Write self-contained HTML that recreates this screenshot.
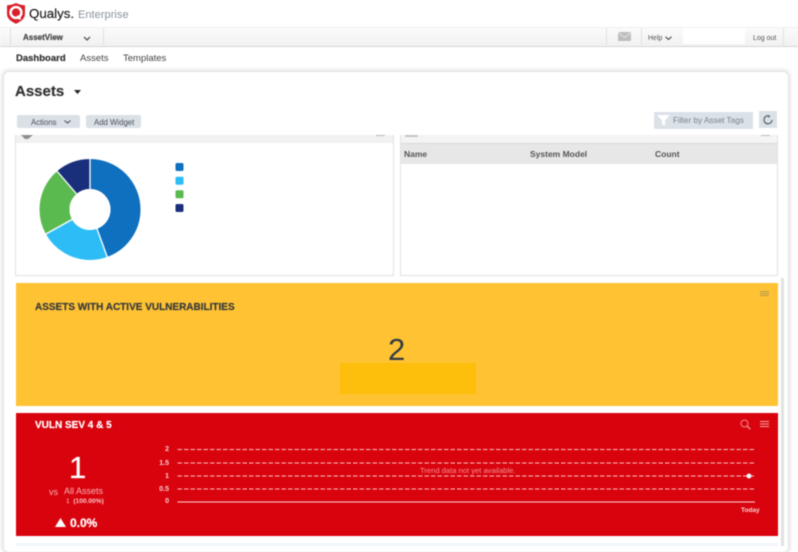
<!DOCTYPE html>
<html><head><meta charset="utf-8"><style>
html,body{margin:0;padding:0;background:#fff}
body{width:798px;height:546px;position:relative;overflow:hidden;font-family:"Liberation Sans",sans-serif;color:#333}
.a{position:absolute}
.t{position:absolute;white-space:nowrap;line-height:1}
.b{-webkit-text-stroke:.2px currentColor}
svg{position:absolute;overflow:visible}
#w{position:absolute;left:0;top:0;width:798px;height:546px;filter:blur(.45px)}
</style></head><body><div id="w">
<svg style="left:6px;top:2px" width="20" height="22" viewBox="0 0 20 22"><path d="M10 1C7.500 2.300 4.500 3 1.500 3.200 1 3.200 1 3.500 1 4v8c0 4.500 4 7.500 9 9.800 5-2.300 9-5.300 9-9.800V4c0-.5 0-.8-.5-.8C15.500 3 12.500 2.300 10 1Z" fill="#d8202c"/><circle cx="10" cy="10.500" r="5.400" fill="none" stroke="#fff" stroke-width="2.500"/><path d="M11 14l3.500 3.200" stroke="#fff" stroke-width="2"/></svg>
<div class="t b" style="left:29px;top:7px;font-size:13.300px;color:#222">Qualys.</div>
<div class="t" style="left:78px;top:10px;font-size:11px;color:#8a929b;letter-spacing:.05px">Enterprise</div>

<div class="a" style="left:0;top:27px;width:798px;height:18px;background:linear-gradient(#fbfbfb,#f1f1f1);border-bottom:1px solid #d6d6d6;border-top:1px solid #efefef"></div>
<div class="a" style="left:10px;top:28px;width:1px;height:17px;background:#e0e0e0"></div>
<div class="a" style="left:103px;top:28px;width:1px;height:17px;background:#e0e0e0"></div>
<div class="t b" style="left:23px;top:33.500px;font-size:8px;font-weight:bold;color:#444">AssetView</div>
<svg style="left:83px;top:36px" width="8" height="5"><path d="M1 1l3 3 3-3" fill="none" stroke="#555" stroke-width="1.300"/></svg>
<div class="a" style="left:606px;top:28px;width:1px;height:17px;background:#e0e0e0"></div>
<svg style="left:618px;top:32px" width="13" height="9"><rect width="13" height="9" fill="#bdbdbd"/><path d="M0 .5l6.500 5 6.500-5" fill="none" stroke="#e8e8e8" stroke-width=".8"/></svg>
<div class="a" style="left:641px;top:28px;width:1px;height:17px;background:#e0e0e0"></div>
<div class="t" style="left:648px;top:34.500px;font-size:7px;color:#555">Help</div>
<svg style="left:665px;top:36px" width="7" height="5"><path d="M.5 .8l3 2.700 3-2.700" fill="none" stroke="#555" stroke-width="1.200"/></svg>
<div class="a" style="left:683px;top:28px;width:62px;height:16px;background:#fff"></div>
<div class="t" style="left:753px;top:34.500px;font-size:7px;color:#555">Log out</div>
<div class="a" style="left:783px;top:28px;width:1px;height:17px;background:#e0e0e0"></div>

<div class="t b" style="left:16px;top:54px;font-size:9.500px;font-weight:bold;color:#333">Dashboard</div>
<div class="t" style="left:80px;top:54px;font-size:9.500px;color:#444">Assets</div>
<div class="t" style="left:123px;top:54px;font-size:9.500px;color:#444">Templates</div>

<div class="a" style="left:4px;top:72px;width:784px;height:480px;background:#fff;border-radius:5px;box-shadow:0 0 4px 2px #dedede"></div>
<div class="t b" style="left:15px;top:84px;font-size:15px;font-weight:bold;color:#333">Assets</div>
<svg style="left:74px;top:90px" width="7" height="4"><path d="M0 0h7L3.500 4Z" fill="#222"/></svg>

<div class="a" style="left:17px;top:115px;width:63px;height:13px;background:#d9e1e7;border-radius:2px"></div>
<div class="t" style="left:31px;top:118.500px;font-size:7.800px;color:#4a4f55">Actions</div>
<svg style="left:64px;top:120px" width="7" height="4"><path d="M.5 .5l3 2.500 3-2.500" fill="none" stroke="#4a4f55" stroke-width="1.100"/></svg>
<div class="a" style="left:86px;top:115px;width:55px;height:13px;background:#d9e1e7;border-radius:2px"></div>
<div class="t" style="left:94px;top:118.500px;font-size:7.800px;color:#4a4f55">Add Widget</div>

<div class="a" style="left:654px;top:112px;width:99px;height:17px;background:#dae2e8;border-radius:1px"></div>
<svg style="left:657px;top:115px" width="13" height="11"><path d="M0 0h13L8 5.500V11L5 9V5.500Z" fill="#fff"/></svg>
<div class="t" style="left:673px;top:117px;font-size:8.200px;color:#7a838a">Filter by Asset Tags</div>
<div class="a" style="left:759px;top:111px;width:18px;height:17px;background:#dae2e8"></div>
<svg style="left:763px;top:115px" width="10" height="10" viewBox="0 0 10 10"><path d="M6.500 1.100A4 4 0 1 0 9 5" fill="none" stroke="#5f6870" stroke-width="1.300"/><path d="M5 0l2.500 1.200L5.500 3Z" fill="#5f6870"/></svg>

<!-- left panel -->
<div class="a" style="left:15px;top:135px;width:379px;height:141px;box-sizing:border-box;background:#fff;border:1px solid #e2e2e2;border-top:0"></div>
<div class="a" style="left:16px;top:135px;width:377px;height:8px;background:#f1f1f1"></div>
<svg style="left:21px;top:135px" width="13" height="4"><path d="M0 0h12L7 4H4Z" fill="#8e8e8e"/></svg>
<div class="a" style="left:376px;top:135px;width:9px;height:1px;background:#bbb"></div>
<svg style="left:0;top:0" width="200" height="270">
<g fill="none" stroke-width="30" transform="rotate(-90 90 209.500)">
<circle cx="90" cy="209.500" r="35.500" stroke="#0f70bf" stroke-dasharray="99.100 223.050"/>
<circle cx="90" cy="209.500" r="35.500" stroke="#2dbdf6" stroke-dasharray="50.200 223.050" stroke-dashoffset="-99.100"/>
<circle cx="90" cy="209.500" r="35.500" stroke="#5aba4f" stroke-dasharray="48.300 223.050" stroke-dashoffset="-149.300"/>
<circle cx="90" cy="209.500" r="35.500" stroke="#1a2f7b" stroke-dasharray="25.450 223.050" stroke-dashoffset="-197.600"/>
</g>
<g stroke="#fff" stroke-width="1.300">
<line x1="90" y1="209.500" x2="90" y2="158"/>
<line x1="90" y1="209.500" x2="107.600" y2="257.900"/>
<line x1="90" y1="209.500" x2="45" y2="234.500"/>
<line x1="90" y1="209.500" x2="56.500" y2="170.500"/>
</g>
<circle cx="90" cy="209.500" r="20.500" fill="#fff"/>
<rect x="175.500" y="163" width="8" height="8" rx="1.500" fill="#0f70bf"/>
<rect x="175.500" y="176.700" width="8" height="8" rx="1.500" fill="#2dbdf6"/>
<rect x="175.500" y="190.300" width="8" height="8" rx="1.500" fill="#5aba4f"/>
<rect x="175.500" y="204" width="8" height="8" rx="1.500" fill="#1a2f7b"/>
</svg>

<!-- right panel -->
<div class="a" style="left:400px;top:135px;width:378px;height:141px;box-sizing:border-box;background:#fff;border:1px solid #e2e2e2;border-top:0"></div>
<div class="a" style="left:401px;top:135px;width:376px;height:8px;background:#f4f4f4;border-bottom:1px solid #d8d8d8"></div>
<div class="a" style="left:405px;top:135px;width:13px;height:2px;background:#c4c4c4"></div>
<div class="a" style="left:761px;top:135px;width:9px;height:1px;background:#bbb"></div>
<div class="a" style="left:401px;top:144px;width:376px;height:20px;background:#e7e7e7"></div>
<div class="t" style="left:404px;top:150px;font-size:8.500px;font-weight:bold;color:#555">Name</div>
<div class="t" style="left:530px;top:150px;font-size:8.500px;font-weight:bold;color:#555">System Model</div>
<div class="t" style="left:655px;top:150px;font-size:8.500px;font-weight:bold;color:#555">Count</div>

<div class="a" style="left:781px;top:278px;width:3px;height:268px;background:#e2e2e2"></div>

<!-- yellow -->
<div class="a" style="left:16px;top:283px;width:762px;height:123px;background:#fec233"></div>
<div class="t b" style="left:35px;top:303px;font-size:10px;font-weight:bold;color:#3a3a3a">ASSETS WITH ACTIVE VULNERABILITIES</div>
<div class="a" style="left:760px;top:291px;width:9px;height:1px;background:#b99a4a;box-shadow:0 2px 0 #b99a4a,0 4px 0 #b99a4a"></div>
<div class="t" style="left:388px;top:334px;font-size:31px;color:#333a42">2</div>
<div class="a" style="left:340px;top:363px;width:136px;height:31px;background:#fdbe0c"></div>

<!-- red -->
<div class="a" style="left:16px;top:413px;width:762px;height:123px;background:#d9030e"></div>
<div class="t b" style="left:35px;top:421px;font-size:10px;font-weight:bold;color:#fff">VULN SEV 4 &amp; 5</div>
<svg style="left:740px;top:419px" width="11" height="11" fill="none" stroke="#f08a8a"><circle cx="4.500" cy="4.500" r="3.500"/><path d="M7 7l3.300 3.300" stroke-width="1.400"/></svg>
<div class="a" style="left:760px;top:421px;width:9px;height:1px;background:#f6a5a5;box-shadow:0 2.500px 0 #f6a5a5,0 5px 0 #f6a5a5"></div>
<div class="t b" style="left:69px;top:452px;font-size:31px;color:#fff">1</div>
<div class="t" style="left:49px;top:487.500px;font-size:9px;color:#f6b4b4">vs</div>
<div class="t" style="left:64px;top:487px;font-size:9px;color:#f6b4b4">All Assets</div>
<div class="t" style="left:66px;top:499px;font-size:6.600px;color:#f8c4c4">1&nbsp;&nbsp;<b>(100.00%)</b></div>
<svg style="left:55px;top:518px" width="11" height="9"><path d="M5.500 0L11 9H0Z" fill="#fff"/></svg>
<div class="t b" style="left:70px;top:517px;font-size:12px;font-weight:bold;color:#fff">0.0%</div>

<div class="t" style="left:159px;top:446px;width:10px;font-size:7px;font-weight:bold;color:#f8d0d0;text-align:right">2</div>
<div class="t" style="left:157px;top:459.500px;width:12px;font-size:7px;font-weight:bold;color:#f8d0d0;text-align:right">1.5</div>
<div class="t" style="left:159px;top:472.500px;width:10px;font-size:7px;font-weight:bold;color:#f8d0d0;text-align:right">1</div>
<div class="t" style="left:157px;top:485.500px;width:12px;font-size:7px;font-weight:bold;color:#f8d0d0;text-align:right">0.5</div>
<div class="t" style="left:159px;top:498px;width:10px;font-size:7px;font-weight:bold;color:#f8d0d0;text-align:right">0</div>
<svg style="left:0;top:0" width="798" height="546">
<g stroke="#f6c0c0" stroke-width="1" stroke-dasharray="4.500 2">
<line x1="177.500" y1="449.500" x2="754" y2="449.500"/>
<line x1="177.500" y1="463" x2="754" y2="463"/>
<line x1="177.500" y1="476" x2="754" y2="476"/>
<line x1="177.500" y1="489" x2="754" y2="489"/>
</g>
<line x1="177.500" y1="502" x2="755" y2="502" stroke="#f8d6d6" stroke-width="1"/>
<circle cx="749" cy="476" r="2.500" fill="#eef4fb"/>
</svg>
<div class="t" style="left:420px;top:467px;font-size:7.600px;color:#f29090">Trend data not yet available.</div>
<div class="t" style="left:741px;top:507.500px;font-size:6.500px;font-weight:bold;color:#f8d0d0">Today</div>

<div class="a" style="left:16px;top:543px;width:762px;height:3px;background:#f2f6fb"></div>
</div></body></html>
